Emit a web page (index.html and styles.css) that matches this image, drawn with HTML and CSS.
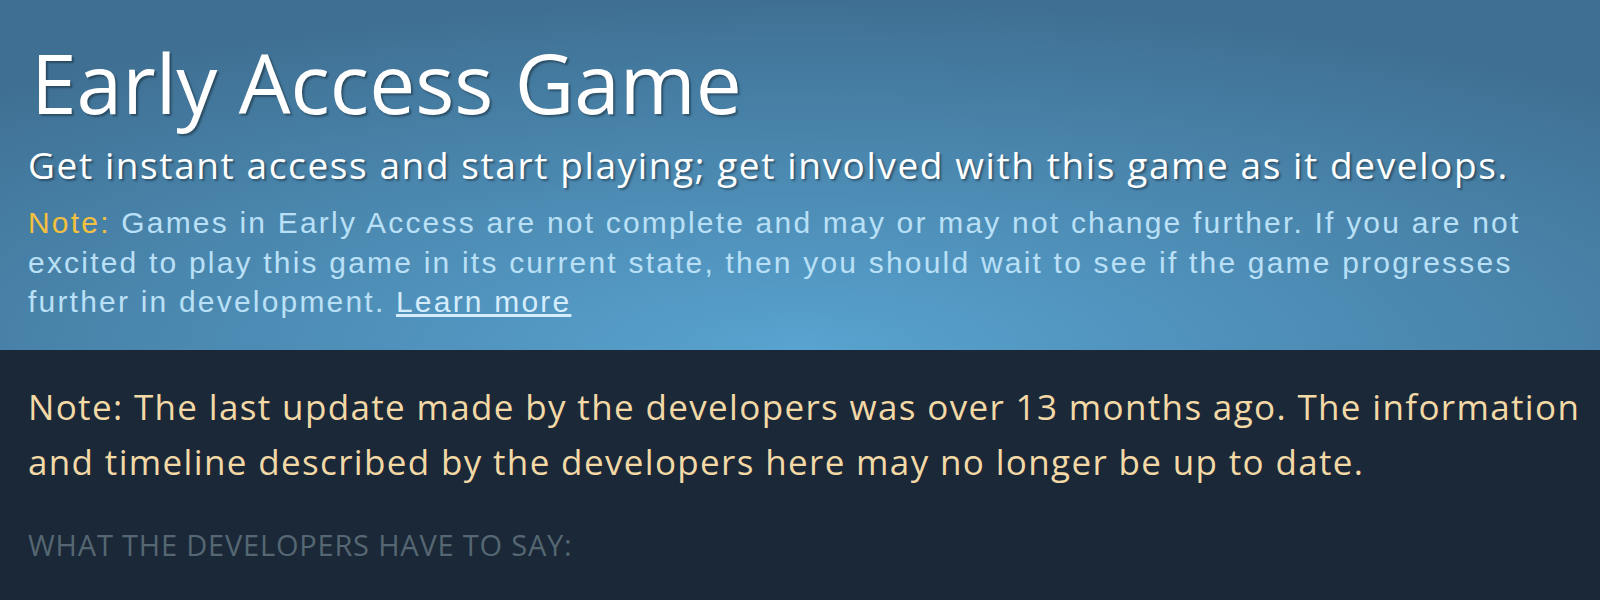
FILE: index.html
```html
<!DOCTYPE html>
<html lang="en">
<head>
    <meta charset="UTF-8">
    <meta name="viewport" content="width=device-width, initial-scale=1.0">
    <title>Early Access Game</title>
    <link rel="stylesheet" href="styles.css">
</head>
<body>

    <!-- Early access banner -->
    <div class="ea-header">
        <h1>Early Access Game</h1>
        <p class="ea-subtitle">Get instant access and start playing; get involved with this game as it develops.</p>
        <p class="ea-note"><span class="note-label">Note:</span> Games in Early Access are not complete and may or may not change further. If you are not excited to play this game in its current state, then you should wait to see if the game progresses further in development. <a href="#">Learn more</a></p>
    </div>

    <!-- Developer section -->
    <div class="ea-body">
        <p class="ea-stale">Note: The last update made by the developers was over 13 months ago. The information and timeline described by the developers here may no longer be up to date.</p>
        <h2 class="ea-dev-title">What the developers have to say:</h2>
    </div>

</body>
</html>
```

FILE: styles.css
```css
body {
    margin: 0;
    background-color: #1b2838;
    font-family: "Open Sans", "Noto Sans", sans-serif;
}

.ea-header {
    padding: 33px 16px 28px 28px;
    background: radial-gradient(ellipse 75% 100% at 50% 100%, #58a3d0 0%, rgba(63, 112, 147, 0) 100%), #3f7093;
}

.ea-header h1 {
    margin: 0 0 9px 3px;
    font-size: 82px;
    font-weight: 400;
    line-height: 98px;
    color: #fff;
    text-shadow: 2px 2px 2px rgba(0, 0, 0, 0.35);
}

.ea-subtitle {
    margin: 0 0 13px 0;
    font-size: 37px;
    line-height: 50px;
    letter-spacing: 1.6px;
    color: #fff;
    text-shadow: 2px 2px 2px rgba(0, 0, 0, 0.35);
}

.ea-note {
    margin: 0;
    font-family: "Liberation Sans", Arial, sans-serif;
    font-size: 30px;
    line-height: 39.5px;
    letter-spacing: 2.2px;
    color: #b9e0f7;
}

.ea-note .note-label {
    color: #f3c03f;
}

.ea-note a {
    color: #d4ecfb;
    text-decoration: underline;
}

.ea-body {
    padding: 29px 16px 0 28px;
}

.ea-stale {
    margin: 0;
    font-size: 35px;
    line-height: 55px;
    letter-spacing: 1.35px;
    color: #f3d9a6;
}

.ea-dev-title {
    margin: 38px 0 0 0;
    font-size: 29px;
    font-weight: 400;
    line-height: 36px;
    letter-spacing: 0.8px;
    text-transform: uppercase;
    color: #556772;
}
```
